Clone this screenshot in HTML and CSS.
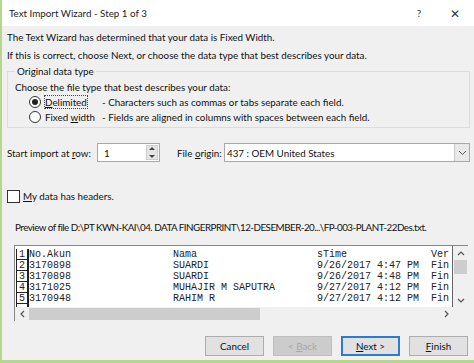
FILE: index.html
```html
<!DOCTYPE html>
<html lang="en">
<head>
    <meta charset="UTF-8">
    <title>Text Import Wizard - Step 1 of 3</title>
    <link rel="stylesheet" href="styles.css">
</head>
<body>
    <div class="window">
        <div class="titlebar">
            <span class="title">Text Import Wizard - Step 1 of 3</span>
            <span class="tb_btn help">?</span>
            <span class="tb_btn close">&#x2715;</span>
        </div>
        <div class="content">
            <p class="line">The Text Wizard has determined that your data is Fixed Width.</p>
            <p class="line">If this is correct, choose Next, or choose the data type that best describes your data.</p>

            <fieldset class="group">
                <legend>Original data type</legend>
                <div class="group_title">Choose the file type that best describes your data:</div>
                <div class="radio_row">
                    <span class="radio checked"></span>
                    <span class="radio_label"><span class="focus"><u>D</u>elimited</span></span>
                    <span class="radio_desc">- Characters such as commas or tabs separate each field.</span>
                </div>
                <div class="radio_row">
                    <span class="radio"></span>
                    <span class="radio_label">Fixed <u>w</u>idth</span>
                    <span class="radio_desc">- Fields are aligned in columns with spaces between each field.</span>
                </div>
            </fieldset>

            <div class="import_row">
                <span class="label">Start import at <u>r</u>ow:</span>
                <div class="spin">
                    <span class="spin_val">1</span>
                    <span class="spin_btns">
                        <span class="spin_up"></span>
                        <span class="spin_down"></span>
                    </span>
                </div>
                <span class="label origin">File <u>o</u>rigin:</span>
                <div class="select">
                    <span class="select_val">437 : OEM United States</span>
                    <span class="select_arrow">
                        <svg width="9" height="6" viewBox="0 0 9 6"><path d="M1 1 L4.5 4.5 L8 1" fill="none" stroke="#555" stroke-width="1"/></svg>
                    </span>
                </div>
            </div>

            <div class="check_row">
                <span class="checkbox"></span>
                <span><u>M</u>y data has headers.</span>
            </div>

            <div class="preview_label">Preview of file D:\PT KWN-KAI\04. DATA FINGERPRINT\12-DESEMBER-20...\FP-003-PLANT-22Des.txt.</div>

            <div class="preview">
                <div class="preview_main">
                    <div class="preview_rows">
                        <div class="nums">
                            <div class="num">1</div>
                            <div class="num">2</div>
                            <div class="num">3</div>
                            <div class="num">4</div>
                            <div class="num">5</div>
                        </div>
                        <pre class="data">No.Akun                 Nama                    sTime              Ver
3170898                 SUARDI                  9/26/2017 4:47 PM  Fin
3170898                 SUARDI                  9/26/2017 4:48 PM  Fin
3171025                 MUHAJIR M SAPUTRA       9/27/2017 4:12 PM  Fin
3170948                 RAHIM R                 9/27/2017 4:12 PM  Fin</pre>
                    </div>
                    <div class="vscroll">
                        <span class="arrow">
                            <svg width="8" height="5" viewBox="0 0 8 5"><path d="M1 4 L4 1 L7 4" fill="none" stroke="#555" stroke-width="1.2"/></svg>
                        </span>
                        <span class="vthumb"></span>
                        <span class="vtrack"></span>
                        <span class="arrow">
                            <svg width="8" height="5" viewBox="0 0 8 5"><path d="M1 1 L4 4 L7 1" fill="none" stroke="#555" stroke-width="1.2"/></svg>
                        </span>
                    </div>
                </div>
                <div class="hscroll">
                    <span class="harrow">
                        <svg width="5" height="8" viewBox="0 0 5 8"><path d="M4 1 L1 4 L4 7" fill="none" stroke="#555" stroke-width="1.2"/></svg>
                    </span>
                    <span class="hthumb"></span>
                    <span class="htrack"></span>
                    <span class="harrow">
                        <svg width="5" height="8" viewBox="0 0 5 8"><path d="M1 1 L4 4 L1 7" fill="none" stroke="#555" stroke-width="1.2"/></svg>
                    </span>
                    <span class="corner"></span>
                </div>
            </div>

            <div class="buttons">
                <button class="btn" type="button">Cancel</button>
                <button class="btn disabled" type="button">&lt; <u>B</u>ack</button>
                <button class="btn default" type="button"><u>N</u>ext &gt;</button>
                <button class="btn" type="button"><u>F</u>inish</button>
            </div>
        </div>
    </div>
</body>
</html>
```

FILE: styles.css
```css
body {
    margin: 0;
    font-family: Lato, "Noto Sans", sans-serif;
    font-size: 9.8px;
    color: #111;
}
u {
    text-decoration: underline;
    text-underline-offset: 1px;
}
.window {
    width: 474px;
    height: 363px;
    box-sizing: border-box;
    border-left: 2px solid #b7d68c;
    border-bottom: 3px solid #b7d68c;
    background-color: #f0f0f0;
    display: flex;
    flex-direction: column;
    white-space: nowrap;
    overflow: hidden;
}
.titlebar {
    height: 26px;
    flex-shrink: 0;
    background-color: #fff;
    display: flex;
    align-items: center;
    padding-left: 7px;
    font-size: 9.8px;
    color: #222;
}
.title {
    flex: 1;
}
.tb_btn {
    width: 36px;
    text-align: center;
    color: #333;
}
.help {
    font-size: 10px;
}
.close {
    font-size: 12px;
    margin-right: 1px;
}
.content {
    flex: 1;
    display: flex;
    flex-direction: column;
    padding: 2px 4px 0 5px;
}
.content > * {
    flex-shrink: 0;
}
.line {
    margin: 0;
    height: 18px;
    line-height: 18px;
}
.group {
    margin: 0;
    padding: 0 0 0 7px;
    border: 1px solid #dcdcdc;
    height: 64px;
    box-sizing: border-box;
}
.group legend {
    padding: 0 2px;
    line-height: 14px;
}
.group_title {
    margin-top: 3px;
    line-height: 13px;
}
.radio_row {
    display: flex;
    align-items: center;
    height: 15px;
    padding-left: 14px;
}
.radio {
    flex-shrink: 0;
    width: 12px;
    height: 12px;
    box-sizing: border-box;
    border: 1px solid #333;
    border-radius: 50%;
    background-color: #fff;
    margin-right: 4px;
    position: relative;
}
.radio.checked::after {
    content: "";
    position: absolute;
    top: 2px;
    left: 2px;
    width: 6px;
    height: 6px;
    border-radius: 50%;
    background-color: #222;
}
.radio_label {
    flex-shrink: 0;
    width: 57px;
}
.focus {
    outline: 1px dotted #444;
    outline-offset: 0;
}
.import_row {
    display: flex;
    align-items: center;
    margin-top: 15px;
    height: 19px;
}
.label {
    flex-shrink: 0;
    width: 90px;
}
.label.origin {
    width: 47px;
    margin-left: 17px;
}
.spin {
    flex-shrink: 0;
    width: 63px;
    height: 19px;
    box-sizing: border-box;
    border: 1px solid #a9a9a9;
    background-color: #fff;
    display: flex;
    align-items: center;
}
.spin_val {
    flex: 1;
    padding-left: 6px;
}
.spin_btns {
    width: 12px;
    height: 15px;
    margin-right: 1px;
    display: flex;
    flex-direction: column;
    background-color: #e5e5e5;
    border: 1px solid #ccc;
    box-sizing: border-box;
}
.spin_up, .spin_down {
    flex: 1;
    position: relative;
}
.spin_up::after, .spin_down::after {
    content: "";
    position: absolute;
    left: 2px;
    border-left: 3px solid transparent;
    border-right: 3px solid transparent;
}
.spin_up::after {
    top: 1px;
    border-bottom: 3px solid #444;
}
.spin_down::after {
    top: 2px;
    border-top: 3px solid #444;
}
.select {
    flex: 1;
    height: 19px;
    box-sizing: border-box;
    border: 1px solid #a9a9a9;
    background-color: #fff;
    display: flex;
    align-items: center;
}
.select_val {
    flex: 1;
    padding-left: 2px;
}
.select_arrow {
    width: 14px;
    height: 17px;
    border-left: 1px solid #ccc;
    background-color: #e8e8e8;
    display: flex;
    align-items: center;
    justify-content: center;
}
.check_row {
    display: flex;
    align-items: center;
    margin-top: 26px;
    height: 16px;
}
.checkbox {
    width: 13px;
    height: 13px;
    box-sizing: border-box;
    border: 1px solid #333;
    background-color: #fff;
    margin-right: 3px;
}
.preview_label {
    margin-top: 15px;
    padding-left: 8px;
    height: 16px;
    line-height: 16px;
    letter-spacing: -0.5px;
}
.preview {
    margin: 10px 2px 0 7px;
    border-top: 1px solid #888;
    border-left: 1px solid #888;
    background-color: #fff;
    height: 76px;
    box-sizing: border-box;
    display: flex;
    flex-direction: column;
}
.preview_main {
    flex: 1;
    display: flex;
    min-height: 0;
}
.preview_rows {
    flex: 1;
    display: flex;
    padding-top: 3px;
    border-right: 1px solid #666;
    overflow: hidden;
}
.nums {
    width: 10px;
    border-left: 1px solid #222;
    border-right: 2px solid #222;
    margin-left: 1px;
}
.num, .data {
    font-family: "Liberation Mono", monospace;
    font-size: 10px;
    line-height: 11px;
    color: #222;
}
.num {
    height: 10px;
    border-bottom: 1px solid #222;
    text-align: center;
    line-height: 11px;
}
.data {
    margin: 0;
    white-space: pre;
}
.vscroll {
    width: 15px;
    display: flex;
    flex-direction: column;
    background-color: #f0f0f0;
}
.arrow {
    height: 14px;
    display: flex;
    align-items: center;
    justify-content: center;
}
.vthumb {
    height: 14px;
    margin: 0 1px;
    background-color: #cdcdcd;
}
.vtrack {
    flex: 1;
}
.hscroll {
    height: 14px;
    flex-shrink: 0;
    display: flex;
    background-color: #f0f0f0;
}
.harrow {
    width: 14px;
    display: flex;
    align-items: center;
    justify-content: center;
}
.hthumb {
    width: 231px;
    margin: 1px 0;
    background-color: #cdcdcd;
}
.htrack {
    flex: 1;
}
.corner {
    width: 15px;
}
.buttons {
    display: flex;
    justify-content: flex-end;
    gap: 9px;
    margin-top: 15px;
    padding-right: 2px;
}
.btn {
    width: 59px;
    height: 20px;
    padding: 0;
    font-family: inherit;
    font-size: 9.8px;
    color: #111;
    background-color: #e1e1e1;
    border: 1px solid #adadad;
}
.btn.default {
    border: 2px solid #2b7bd0;
}
.btn.disabled {
    color: #a8a8a8;
    background-color: #cccccc;
    border-color: #bfbfbf;
}
```
